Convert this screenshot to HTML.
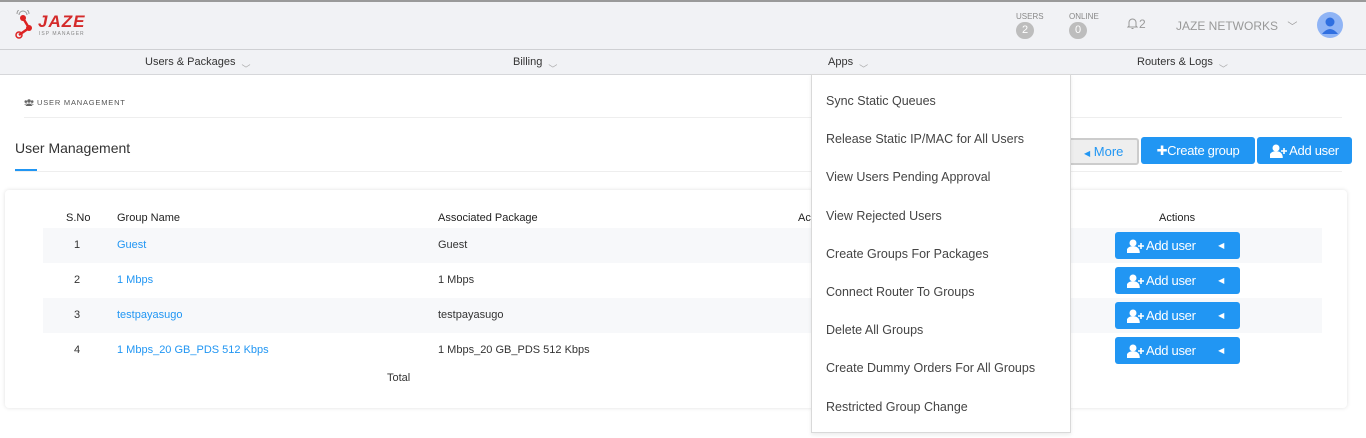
<!DOCTYPE html>
<html><head><style>
*{box-sizing:border-box;margin:0;padding:0}
body{width:1366px;height:438px;overflow:hidden;font-family:"Liberation Sans",sans-serif;background:#fff;position:relative;color:#333}
.abs{position:absolute}
.hdr{left:0;top:0;width:1366px;height:50px;background:#f1f2f5;border-top:2px solid #9a9a9a;border-bottom:1px solid #cfd0d3}
.nav{left:0;top:50px;width:1366px;height:25px;background:#f1f2f5;border-bottom:1px solid #d6d7da;font-size:11px;color:#333}
.nav span{position:absolute;top:6px}
.chev{color:#aaa;font-size:9px;margin-left:6px}
.badge{width:18px;height:17px;border-radius:9px;background:#bdbdbd;color:#fff;font-size:11px;text-align:center;line-height:17px}
.small{font-size:8px;color:#888}
.btn{background:#2196f3;color:#fff;border-radius:3px;font-size:13px;text-align:center;line-height:27px;height:27px;letter-spacing:-.3px}
.menu{left:811px;top:74px;width:260px;height:359px;background:#fff;border:1px solid #d9d9d9;box-shadow:0 2px 4px rgba(0,0,0,.08);font-size:12.5px;color:#444}
.menu div{position:absolute;left:14px}
.card{left:5px;top:190px;width:1342px;height:218px;background:#fff;border-radius:4px;box-shadow:0 0 4px rgba(0,0,0,.12)}
.row{left:43px;width:1279px;height:35px;background:#f7f8fa}
.t{position:absolute;font-size:11px}
.lnk{color:#2196f3}
.ab{position:absolute;left:1115px;width:125px;height:27px;background:#2196f3;border-radius:3px;color:#fff;font-size:13px;line-height:27px;padding-left:12px;letter-spacing:-.3px}
.ab i{position:absolute;right:16px;font-style:normal;font-size:8px}
svg.u{vertical-align:-3px;margin-right:1px}
</style></head><body>
<div class="abs hdr"></div>
<svg class="abs" style="left:14px;top:10px" width="22" height="30" viewBox="0 0 22 30">
<path d="M3 4 A6 6 0 0 1 15 4 M5 5 A4 4 0 0 1 13 5" stroke="#999" fill="none" stroke-width="1"/>
<circle cx="9" cy="8" r="3" fill="#d22"/><path d="M9 8 L15 18 L5 25" stroke="#d22" stroke-width="2.5" fill="none"/>
<circle cx="15" cy="18" r="3" fill="#d22"/><circle cx="5" cy="25" r="3" fill="none" stroke="#d22" stroke-width="1.5"/>
</svg>
<div class="abs" style="left:38px;top:12px;font-size:17px;font-weight:bold;color:#d42a2a;letter-spacing:1px;font-style:italic">JAZE</div>
<div class="abs" style="left:39px;top:31px;font-size:5px;color:#888;letter-spacing:1px">ISP MANAGER</div>
<div class="abs small" style="left:1016px;top:12px">USERS</div>
<div class="abs badge" style="left:1016px;top:22px">2</div>
<div class="abs small" style="left:1069px;top:12px">ONLINE</div>
<div class="abs badge" style="left:1069px;top:22px">0</div>
<svg class="abs" style="left:1127px;top:17px" width="11" height="13" viewBox="0 0 11 13"><path d="M2 9 V5.5 A3.5 3.5 0 0 1 9 5.5 V9 L10 10 H1 Z M4.5 11.5 H6.5" stroke="#999" fill="none" stroke-width="1"/></svg>
<div class="abs" style="left:1139px;top:17px;font-size:12px;color:#999">2</div>
<div class="abs" style="left:1176px;top:18px;font-size:12px;color:#999">JAZE NETWORKS <span style="margin-left:6px;font-size:10px">﹀</span></div>
<svg class="abs" style="left:1317px;top:12px" width="26" height="26" viewBox="0 0 26 26"><circle cx="13" cy="13" r="13" fill="#8fb4f5"/><circle cx="13" cy="10" r="4.5" fill="#2f6fe0"/><path d="M5 22 Q13 12 21 22 Z" fill="#2f6fe0"/></svg>
<div class="abs nav">
<span style="left:145px">Users &amp; Packages<span class="chev">﹀</span></span>
<span style="left:513px">Billing<span class="chev">﹀</span></span>
<span style="left:828px">Apps<span class="chev">﹀</span></span>
<span style="left:1137px">Routers &amp; Logs<span class="chev">﹀</span></span>
</div>
<svg class="abs" style="left:24px;top:99px" width="10" height="7" viewBox="0 0 10 7"><circle cx="5" cy="2" r="1.8" fill="#666"/><circle cx="1.8" cy="2.6" r="1.3" fill="#666"/><circle cx="8.2" cy="2.6" r="1.3" fill="#666"/><path d="M1.5 7 Q5 2 8.5 7Z M0 6 Q2 3.5 3.5 5Z M10 6 Q8 3.5 6.5 5Z" fill="#666"/></svg>
<div class="abs" style="left:37px;top:98px;font-size:7.5px;color:#555;letter-spacing:.8px">USER MANAGEMENT</div>
<div class="abs" style="left:24px;top:117px;width:1318px;height:1px;background:#eee"></div>
<div class="abs" style="left:15px;top:140px;font-size:14px;color:#333">User Management</div>
<div class="abs" style="left:15px;top:169px;width:22px;height:3px;background:#2196f3"></div>
<div class="abs" style="left:15px;top:171px;width:1327px;height:1px;background:#eee"></div>
<div class="abs" style="left:1068px;top:138px;width:71px;height:27px;border:2px solid #ccc;background:#eee;border-radius:3px;font-size:13px;color:#2196f3;line-height:23px;padding-left:14px"><span style="font-size:8px">◀</span> More</div>
<div class="abs btn" style="left:1141px;top:137px;width:114px">✚Create group</div>
<div class="abs btn" style="left:1257px;top:137px;width:95px"><svg class="u" width="18" height="14" viewBox="0 0 18 14"><circle cx="6" cy="4" r="3.5" fill="#fff"/><path d="M0 14 Q0 8 6 8 Q12 8 12 14Z M11 7 H17 M14 4 V10" fill="#fff" stroke="#fff" stroke-width="1.6"/></svg>Add user</div>
<div class="abs card"></div>
<div class="abs row" style="top:228px"></div>
<div class="abs row" style="top:298px"></div>
<div class="t" style="left:66px;top:212px;color:#222">S.No</div>
<div class="t" style="left:117px;top:212px;color:#222">Group Name</div>
<div class="t" style="left:438px;top:212px;color:#222">Associated Package</div>
<div class="t" style="left:798px;top:212px;color:#222">Ac</div>
<div class="t" style="left:1159px;top:212px;color:#222">Actions</div>
<div class="t" style="left:74px;top:239px">1</div><div class="t lnk" style="left:117px;top:239px">Guest</div><div class="t" style="left:438px;top:239px">Guest</div>
<div class="t" style="left:74px;top:274px">2</div><div class="t lnk" style="left:117px;top:274px">1 Mbps</div><div class="t" style="left:438px;top:274px">1 Mbps</div>
<div class="t" style="left:74px;top:309px">3</div><div class="t lnk" style="left:117px;top:309px">testpayasugo</div><div class="t" style="left:438px;top:309px">testpayasugo</div>
<div class="t" style="left:74px;top:344px">4</div><div class="t lnk" style="left:117px;top:344px">1 Mbps_20 GB_PDS 512 Kbps</div><div class="t" style="left:438px;top:344px">1 Mbps_20 GB_PDS 512 Kbps</div>
<div class="t" style="left:387px;top:372px">Total</div>
<div class="ab" style="top:232px"><svg class="u" width="18" height="14" viewBox="0 0 18 14"><circle cx="6" cy="4" r="3.5" fill="#fff"/><path d="M0 14 Q0 8 6 8 Q12 8 12 14Z M11 7 H17 M14 4 V10" fill="#fff" stroke="#fff" stroke-width="1.6"/></svg>Add user<i>◀</i></div>
<div class="ab" style="top:267px"><svg class="u" width="18" height="14" viewBox="0 0 18 14"><circle cx="6" cy="4" r="3.5" fill="#fff"/><path d="M0 14 Q0 8 6 8 Q12 8 12 14Z M11 7 H17 M14 4 V10" fill="#fff" stroke="#fff" stroke-width="1.6"/></svg>Add user<i>◀</i></div>
<div class="ab" style="top:302px"><svg class="u" width="18" height="14" viewBox="0 0 18 14"><circle cx="6" cy="4" r="3.5" fill="#fff"/><path d="M0 14 Q0 8 6 8 Q12 8 12 14Z M11 7 H17 M14 4 V10" fill="#fff" stroke="#fff" stroke-width="1.6"/></svg>Add user<i>◀</i></div>
<div class="ab" style="top:337px"><svg class="u" width="18" height="14" viewBox="0 0 18 14"><circle cx="6" cy="4" r="3.5" fill="#fff"/><path d="M0 14 Q0 8 6 8 Q12 8 12 14Z M11 7 H17 M14 4 V10" fill="#fff" stroke="#fff" stroke-width="1.6"/></svg>Add user<i>◀</i></div>
<div class="abs menu">
<div style="top:19px">Sync Static Queues</div>
<div style="top:57px">Release Static IP/MAC for All Users</div>
<div style="top:95px">View Users Pending Approval</div>
<div style="top:134px">View Rejected Users</div>
<div style="top:172px">Create Groups For Packages</div>
<div style="top:210px">Connect Router To Groups</div>
<div style="top:248px">Delete All Groups</div>
<div style="top:286px">Create Dummy Orders For All Groups</div>
<div style="top:325px">Restricted Group Change</div>
</div>
</body></html>
